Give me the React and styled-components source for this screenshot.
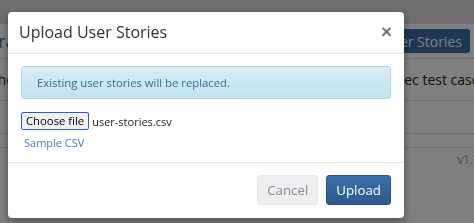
import React from "react";
import styled, { createGlobalStyle } from "styled-components";

const GlobalStyle = createGlobalStyle`
  html, body {
    margin: 0;
    padding: 0;
    width: 474px;
    height: 223px;
    overflow: hidden;
    background: #ffffff;
    font-family: "Open Sans", "Liberation Sans", sans-serif;
    color: #333333;
  }
`;

function App() {
  return (
    <>
      <GlobalStyle />
      <Page>
        <NavBar />
        <PageHeader>
          <PageTitle>Integra</PageTitle>
          <HeaderButton>Upload User Stories</HeaderButton>
        </PageHeader>
        <TableRow height={41}>
          <Cell>The</Cell>
          <Cell>Spec test case mapping</Cell>
        </TableRow>
        <TableRow height={32} />
        <TableRow height={13} />
        <Footer>v1.7</Footer>
      </Page>

      <Backdrop>
        <Modal>
          <ModalHeader>
            <ModalTitle>Upload User Stories</ModalTitle>
            <CloseButton aria-label="Close">&times;</CloseButton>
          </ModalHeader>
          <ModalBody>
            <Alert>Existing user stories will be replaced.</Alert>
            <FileRow>
              <FileButton>Choose file</FileButton>
              <FileName>user-stories.csv</FileName>
            </FileRow>
            <SampleLink href="#">Sample CSV</SampleLink>
          </ModalBody>
          <ModalFooter>
            <Button>Cancel</Button>
            <Button primary>Upload</Button>
          </ModalFooter>
        </Modal>
      </Backdrop>
    </>
  );
}

const Page = styled.div`
  display: flex;
  flex-direction: column;
  width: 474px;
  height: 223px;
  overflow: hidden;
`;
const NavBar = styled.div`
  height: 24px;
  background: #dedede;
  flex-shrink: 0;
`;
const PageHeader = styled.div`
  display: flex;
  align-items: center;
  justify-content: space-between;
  height: 34px;
  padding: 0 4px 0 0;
  border-bottom: 1px solid #dddddd;
  flex-shrink: 0;
`;
const PageTitle = styled.div`
  margin-left: -44px;
  font-size: 18px;
  color: #3a6ea5;
`;
const HeaderButton = styled.div`
  height: 24px;
  display: flex;
  align-items: center;
  padding: 0 8px;
  background: #3b6fa8;
  color: #ffffff;
  border-radius: 3px;
  font-size: 14px;
  white-space: nowrap;
`;
const TableRow = styled.div`
  display: grid;
  grid-template-columns: 388px 1fr;
  align-items: center;
  height: ${(p) => p.height}px;
  border-bottom: 1px solid #dddddd;
  flex-shrink: 0;
  white-space: nowrap;
  font-size: 14px;
  color: #222222;
`;
const Cell = styled.div`
  &:first-child {
    margin-left: -10px;
  }
`;
const Footer = styled.div`
  text-align: right;
  padding: 3px 0 0 0;
  margin-right: -6px;
  font-size: 12px;
  color: #999999;
`;

const Backdrop = styled.div`
  position: fixed;
  inset: 0;
  background: rgba(0, 0, 0, 0.5);
  display: flex;
  align-items: flex-start;
  padding: 12px 0 0 8px;
`;
const Modal = styled.div`
  width: 396px;
  display: flex;
  flex-direction: column;
  background: #ffffff;
  border-radius: 4px;
  box-shadow: 0 3px 9px rgba(0, 0, 0, 0.4);
`;
const ModalHeader = styled.div`
  display: flex;
  align-items: center;
  justify-content: space-between;
  height: 39px;
  padding: 0 12px 2px 11px;
  border-bottom: 1px solid #e5e5e5;
`;
const ModalTitle = styled.h4`
  margin: 0;
  font-size: 16px;
  font-weight: 400;
  color: #333333;
`;
const CloseButton = styled.span`
  font-size: 19px;
  font-weight: 700;
  line-height: 1;
  color: #000000;
  opacity: 0.55;
  font-family: "Liberation Sans", sans-serif;
`;
const ModalBody = styled.div`
  display: flex;
  flex-direction: column;
  padding: 12px 13px 12px 13px;
  border-bottom: 1px solid #e5e5e5;
`;
const Alert = styled.div`
  height: 31px;
  display: flex;
  align-items: center;
  padding: 0 15px;
  background: linear-gradient(#d9edf7, #c2e1f1);
  border: 1px solid #b2d6e8;
  border-radius: 3px;
  color: #31708f;
  font-size: 11.3px;
`;
const FileRow = styled.div`
  display: flex;
  align-items: center;
  gap: 3px;
  margin-top: 13px;
`;
const FileButton = styled.button`
  height: 18px;
  padding: 0 4px;
  border: 1px solid #3160b0;
  border-radius: 2px;
  background: #eef0f4;
  color: #000000;
  font-family: "Open Sans", "Liberation Sans", sans-serif;
  font-size: 11.3px;
  line-height: 1;
`;
const FileName = styled.span`
  font-size: 11px;
  color: #222222;
`;
const SampleLink = styled.a`
  margin: 5px 0 0 3px;
  font-size: 11px;
  color: #4a78a8;
  text-decoration: none;
`;
const ModalFooter = styled.div`
  display: flex;
  justify-content: flex-end;
  gap: 8px;
  padding: 12px 13px 13px;
`;
const Button = styled.button`
  height: 30px;
  padding: 0 9px;
  border-radius: 3px;
  font-family: "Open Sans", "Liberation Sans", sans-serif;
  font-size: 13.3px;
  border: 1px solid ${(p) => (p.primary ? "#275384" : "#e6e8ea")};
  background: ${(p) =>
    p.primary ? "linear-gradient(#3d6fa8, #2c5a90)" : "#eceef0"};
  color: ${(p) => (p.primary ? "#ffffff" : "#8a8d90")};
`;

export default App;
